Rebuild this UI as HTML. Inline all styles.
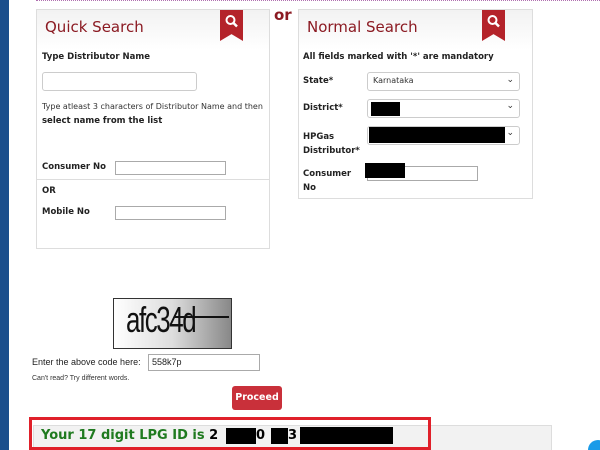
<!DOCTYPE html>
<html style="overflow:hidden;height:450px"><head><meta charset="utf-8"><style>
body{margin:0;width:600px;height:450px;overflow:hidden;background:#fff;font-family:"DejaVu Sans","Liberation Sans",sans-serif;position:relative}
.a{position:absolute}
.box{position:absolute;border:1px solid #ddd;background:#fff}
.hd{position:absolute;left:0;right:0;top:0;height:40px;background:linear-gradient(#f2f2f2,#fff)}
.t{position:absolute;font-size:15px;color:#8b1a22;top:8px;left:8px;font-family:"DejaVu Sans",sans-serif}
.bd{position:absolute;width:23px;height:31px;background:#b4232a;clip-path:polygon(0 0,100% 0,100% 100%,50% 78%,0 100%)}
.l{position:absolute;font-size:8.5px;font-weight:bold;color:#222}
.in{position:absolute;border:1px solid #aaa;background:#fff;box-sizing:border-box}
.sel{position:absolute;border:1px solid #ccc;border-radius:3px;background:#fff;box-sizing:border-box;font-size:8px;color:#333}
.blk{position:absolute;background:#000}
</style></head><body>
<div class="a" style="left:0;top:0;width:9px;height:450px;background:#1b4e8c"></div>
<div class="a" style="left:36px;top:0;width:564px;border-top:1px dotted #b070b0"></div>

<div class="box" style="left:36px;top:9px;width:232px;height:238px">
 <div class="hd"></div>
 <div class="t">Quick Search</div>
 <div class="bd" style="left:183px;top:0"><svg width="23" height="24" viewBox="0 0 23 24"><circle cx="10.5" cy="10" r="4" stroke="#fff" stroke-width="2" fill="none"/><line x1="13.5" y1="13" x2="17" y2="16.5" stroke="#fff" stroke-width="2.5"/></svg></div>
 <div class="l" style="left:5px;top:42px">Type Distributor Name</div>
 <div class="in" style="left:5px;top:62px;width:155px;height:19px;border-color:#ccc;border-radius:3px"></div>
 <div class="a" style="left:5px;top:92px;font-size:8px;color:#333">Type atleast 3 characters of Distributor Name and then</div>
 <div class="l" style="left:5px;top:106px">select name from the list</div>
 <div class="l" style="left:5px;top:152px">Consumer No</div>
 <div class="in" style="left:78px;top:151px;width:111px;height:14px"></div>
 <div class="a" style="left:0;top:169px;width:232px;border-top:1px solid #ddd"></div>
 <div class="l" style="left:5px;top:176px">OR</div>
 <div class="l" style="left:5px;top:197px">Mobile No</div>
 <div class="in" style="left:78px;top:196px;width:111px;height:14px"></div>
</div>

<div class="a" style="left:274px;top:6px;font-size:15px;font-weight:bold;color:#8b1a22">or</div>

<div class="box" style="left:298px;top:9px;width:233px;height:188px">
 <div class="hd"></div>
 <div class="t">Normal Search</div>
 <div class="bd" style="left:183px;top:0"><svg width="23" height="24" viewBox="0 0 23 24"><circle cx="10.5" cy="10" r="4" stroke="#fff" stroke-width="2" fill="none"/><line x1="13.5" y1="13" x2="17" y2="16.5" stroke="#fff" stroke-width="2.5"/></svg></div>
 <div class="l" style="left:4px;top:42px">All fields marked with '*' are mandatory</div>
 <div class="l" style="left:4px;top:66px">State*</div>
 <div class="sel" style="left:68px;top:62px;width:153px;height:19px;padding:3px 5px">Karnataka<span style="position:absolute;right:5px;top:2px;font-size:9px">⌄</span></div>
 <div class="l" style="left:4px;top:93px">District*</div>
 <div class="sel" style="left:68px;top:89px;width:153px;height:19px"><div class="blk" style="left:3px;top:2px;width:29px;height:14px"></div><span style="position:absolute;right:5px;top:1px;font-size:9px">⌄</span></div>
 <div class="l" style="left:4px;top:120px;line-height:14px">HPGas<br>Distributor*</div>
 <div class="sel" style="left:68px;top:116px;width:153px;height:19px"><div class="blk" style="left:1px;top:0;width:136px;height:16px"></div><span style="position:absolute;right:5px;top:1px;font-size:9px">⌄</span></div>
 <div class="l" style="left:4px;top:157px;line-height:14px">Consumer<br>No</div>
 <div class="in" style="left:68px;top:156px;width:111px;height:15px"></div>
 <div class="blk" style="left:66px;top:153px;width:40px;height:15px"></div>
</div>

<div class="a" style="left:113px;top:298px;width:119px;height:51px;border:1px solid #333;background:linear-gradient(90deg,#fff,#ddd 50%,#888);box-sizing:border-box;overflow:hidden">
 <div class="a" style="left:12px;top:0px;font-size:36px;font-family:'Liberation Sans',sans-serif;letter-spacing:-2px;color:#111;transform:scaleX(0.72);transform-origin:0 0">afc34d</div>
 <div class="a" style="left:60px;top:17px;width:55px;height:2px;background:#111"></div>
</div>
<div class="a" style="left:32px;top:357px;font-size:9px;font-family:'Liberation Sans',sans-serif;color:#222">Enter the above code here:</div>
<div class="in" style="left:148px;top:354px;width:112px;height:17px;font-size:9px;padding:2px 3px;color:#222;font-family:'Liberation Sans',sans-serif">558k7p</div>
<div class="a" style="left:32px;top:375px;font-size:7px;color:#333;font-family:'Liberation Sans',sans-serif">Can't read? Try different words.</div>
<div class="a" style="left:232px;top:386px;width:50px;height:24px;background:#c9303a;border-radius:3px;color:#fff;font-size:9.5px;font-weight:bold;text-align:center;line-height:24px">Proceed</div>

<div class="a" style="left:33px;top:425px;width:517px;height:30px;background:#f2f2f2;border:1px solid #ddd"></div>
<div class="a" style="left:29px;top:417px;width:402px;height:33px;border:3px solid #e0202a;box-sizing:border-box"></div>
<div class="a" style="left:41px;top:428px;font-size:13px;font-weight:bold;color:#1f7a1f">Your 17 digit LPG ID is <span style="color:#000">2</span></div>
<div class="blk" style="left:226px;top:428px;width:30px;height:16px"></div>
<div class="a" style="left:256px;top:428px;font-size:13px;font-weight:bold">0</div>
<div class="blk" style="left:271px;top:428px;width:17px;height:16px"></div>
<div class="a" style="left:288px;top:428px;font-size:13px;font-weight:bold">3</div>
<div class="blk" style="left:300px;top:427px;width:93px;height:17px"></div>
<div class="a" style="left:588px;top:440px;width:20px;height:20px;border-radius:50%;background:#1a9be8"></div>
</body></html>
